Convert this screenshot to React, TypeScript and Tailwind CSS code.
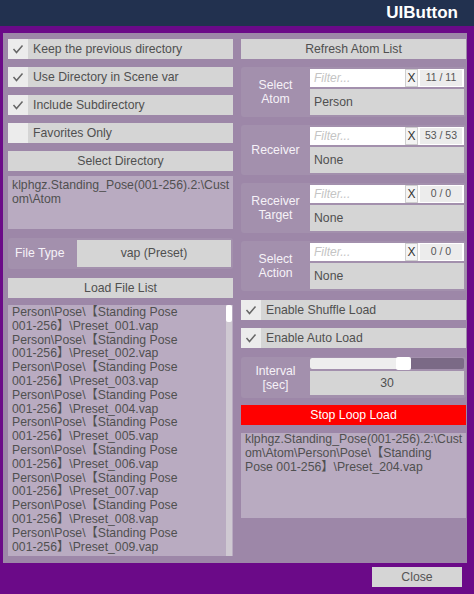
import type { ReactNode } from 'react'

const FILES = Array.from({ length: 9 }, (_, i) => `Preset_${String(i + 1).padStart(3, '0')}.vap`)

function Check({ checked }: { checked: boolean }) {
  return (
    <div className="flex h-[20px] w-[20px] shrink-0 items-center justify-center bg-[#ececec]">
      {checked ? (
        <svg width="12" height="10" viewBox="0 0 12 10">
          <polyline points="1.5,5 4.5,8.5 10.5,1.5" fill="none" stroke="#666" strokeWidth="1.5" />
        </svg>
      ) : null}
    </div>
  )
}

function Toggle({ label, checked }: { label: string; checked: boolean }) {
  return (
    <div className="flex h-[20px] bg-[#d5d5d5]">
      <Check checked={checked} />
      <div className="flex items-center pl-[5px] text-[12.25px] text-[#505050]">{label}</div>
    </div>
  )
}

function Btn({ label, className = '' }: { label: string; className?: string }) {
  return (
    <div className={`flex h-[20px] items-center justify-center bg-[#d5d5d5] text-[12.25px] text-[#505050] ${className}`}>
      {label}
    </div>
  )
}

function Group({ label, children, className = '' }: { label: ReactNode; children: ReactNode; className?: string }) {
  return (
    <div className={`flex rounded-[3px] bg-[#a390ad] ${className}`}>
      <div className="flex w-[69px] shrink-0 items-center justify-center text-center text-[12.25px] leading-[14px] text-[#f6f2f8]">
        {label}
      </div>
      <div className="flex min-w-0 flex-1 flex-col pr-[2px]">{children}</div>
    </div>
  )
}

function Picker({ label, count, value, className = '' }: { label: ReactNode; count: string; value: string; className?: string }) {
  return (
    <Group label={label} className={`h-[50px] ${className}`}>
      <div className="mt-[2px] flex h-[18px] bg-white">
        <div className="flex flex-1 items-center pl-[4px] text-[12px] italic text-[#c4c4c4]">Filter...</div>
        <div className="flex w-[13px] items-center justify-center border border-[#cfcfcf] bg-[#f4f4f4] text-[12px] text-[#333]">X</div>
        <div className="mx-[2px] my-[1px] flex w-[42px] items-center justify-center bg-[#ececec] text-[10.5px] text-[#555]">
          {count}
        </div>
      </div>
      <div className="mt-[2px] flex h-[26px] items-center bg-[#d5d5d5] pl-[4px] text-[12.25px] text-[#505050]">{value}</div>
    </Group>
  )
}

export default function App() {
  return (
    <div className="h-[594px] w-[474px] overflow-hidden bg-[#6b0a88] font-['Liberation_Sans','Noto_Sans_CJK_SC',sans-serif]">
      <div className="flex h-[26px] items-center justify-end bg-[#22314f] pr-[16px] text-[17px] font-bold text-white">
        UIButton
      </div>
      <div className="ml-[3px] mr-[7px] mt-[7px] flex h-[530px] gap-[8px] bg-[#9d87a8] pl-[5px] pr-[1px] pt-[6px]">
        {/* left column */}
        <div className="flex w-[225px] flex-col">
          <div className="flex flex-col gap-[8px]">
            <Toggle label="Keep the previous directory" checked />
            <Toggle label="Use Directory in Scene var" checked />
            <Toggle label="Include Subdirectory" checked />
            <Toggle label="Favorites Only" checked={false} />
            <Btn label="Select Directory" />
          </div>
          <div className="mt-[5px] h-[53px] bg-[#b9abc1] pl-[4px] pt-[3px] text-[12.25px] leading-[13.8px] text-[#505050]">
            <div>klphgz.Standing_Pose(001-256).2:\Cust</div>
            <div>om\Atom</div>
          </div>
          <div className="mt-[9px] flex h-[31px] items-center rounded-[3px] bg-[#a390ad]">
            <div className="w-[69px] pl-[7px] text-[12.25px] text-[#f6f2f8]">File Type</div>
            <div className="mr-[2px] flex h-[27px] flex-1 items-center justify-center bg-[#d5d5d5] text-[12.25px] text-[#505050]">
              vap (Preset)
            </div>
          </div>
          <Btn label="Load File List" className="mt-[9px]" />
          <div className="mt-[7px] flex h-[251px] overflow-hidden bg-[#b9abc1]">
            <div className="flex-1 overflow-hidden pl-[4px] pt-[1px] text-[12.25px] leading-[13.8px] text-[#505050]">
              {FILES.map((f) => (
                <div key={f}>
                  <div>Person\Pose\【Standing Pose</div>
                  <div>001-256】\{f}</div>
                </div>
              ))}
            </div>
            <div className="mr-[1px] w-[6px] bg-[#cfc9d2]">
              <div className="h-[17px] rounded-[2px] bg-white" />
            </div>
          </div>
        </div>

        {/* right column */}
        <div className="flex w-[225px] flex-col">
          <Btn label="Refresh Atom List" />
          <Picker label={<>Select<br />Atom</>} count="11 / 11" value="Person" className="mt-[8px]" />
          <Picker label="Receiver" count="53 / 53" value="None" className="mt-[8px]" />
          <Picker label={<>Receiver<br />Target</>} count="0 / 0" value="None" className="mt-[8px]" />
          <Picker label={<>Select<br />Action</>} count="0 / 0" value="None" className="mt-[8px]" />
          <div className="mt-[9px] flex flex-col gap-[8px]">
            <Toggle label="Enable Shuffle Load" checked />
            <Toggle label="Enable Auto Load" checked />
          </div>
          <Group label={<>Interval<br />[sec]</>} className="mt-[9px] h-[41px]">
            <div className="relative mt-[1px] h-[11px] rounded-[2px] bg-[#7b6a86]">
              <div className="h-full w-[94px] rounded-l-[2px] bg-[#eeeeee]" />
              <div className="absolute left-[86px] top-[-1px] h-[13px] w-[15px] rounded-[2px] bg-white" />
            </div>
            <div className="mt-[2px] flex h-[24px] items-center justify-center bg-[#d5d5d5] text-[12.25px] text-[#505050]">30</div>
          </Group>
          <div className="mt-[7px] flex h-[20px] items-center justify-center bg-[#ff0000] text-[12.25px] text-white">
            Stop Loop Load
          </div>
          <div className="mt-[8px] h-[85px] bg-[#b9abc1] pl-[4px] text-[12.25px] leading-[13.8px] text-[#505050]">
            <div>klphgz.Standing_Pose(001-256).2:\Cust</div>
            <div>om\Atom\Person\Pose\【Standing</div>
            <div>Pose 001-256】\Preset_204.vap</div>
          </div>
        </div>
      </div>
      <div className="flex justify-end pr-[12px] pt-[4px]">
        <div className="flex h-[20px] w-[90px] items-center justify-center bg-[#d5d5d5] text-[12.25px] text-[#555]">Close</div>
      </div>
    </div>
  )
}
